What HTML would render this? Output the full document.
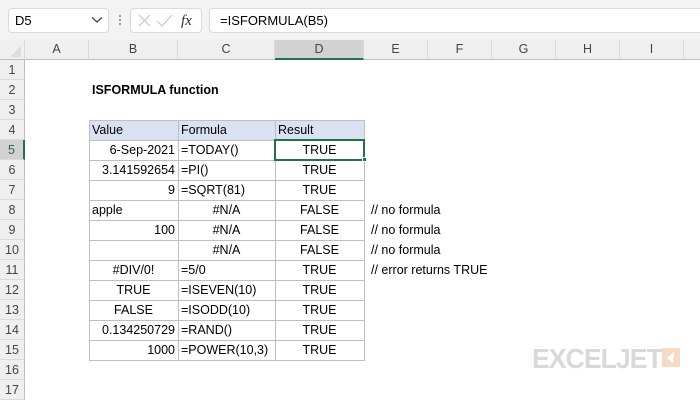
<!DOCTYPE html>
<html><head><meta charset="utf-8"><style>
*{margin:0;padding:0;box-sizing:border-box}
body{width:700px;height:400px;overflow:hidden;background:#fff;font-family:"Liberation Sans",Arial,sans-serif;font-size:12.5px;color:#000;position:relative}
.a{position:absolute}
.top{left:0;top:0;width:700px;height:40px;background:#f3f3f3}
.box{background:#fff;border:1px solid #dadada;border-radius:4px}
.hdr{top:40px;height:20px;background:#efefef;border-bottom:1px solid #bdbdbd;border-right:1px solid #dadada;text-align:center;line-height:19px;color:#444;font-size:12.5px}
.rn{left:0;width:25px;height:20px;background:#efefef;border-right:1px solid #bdbdbd;border-bottom:1px solid #dadada;color:#444;text-align:center;line-height:20px;font-size:12.5px}
.c{position:absolute;height:20px;line-height:21px;white-space:nowrap;padding:0 3px;overflow:hidden}
.r{text-align:right}.m{text-align:center}
.h{position:absolute;left:89px;width:276px;height:1px;background:#bfbfbf}
.v{position:absolute;top:120px;height:241px;width:1px;background:#bfbfbf}
.B{left:89px;width:89px}.C{left:178px;width:97px}.D{left:275px;width:89px}
</style></head><body>
<div class="a top"></div>
<div class="a box" style="left:8px;top:8px;width:101px;height:25px"></div>
<div class="a" style="left:15px;top:13px;font-size:13px">D5</div>
<svg class="a" style="left:91px;top:16px" width="12" height="8"><path d="M1 1.5 L6 6 L11 1.5" stroke="#444" stroke-width="1.3" fill="none"/></svg>
<div class="a" style="left:119px;top:15px;width:2px;height:2px;background:#999;box-shadow:0 4px #999,0 8px #999"></div>
<div class="a box" style="left:130px;top:8px;width:72px;height:25px"></div>
<svg class="a" style="left:137px;top:13px" width="60" height="16"><path d="M2 2 L13 13 M13 2 L2 13" stroke="#c8c8c8" stroke-width="1.2"/><path d="M20 8 L25 13 L35 2" stroke="#c8c8c8" stroke-width="1.2" fill="none"/><text x="44" y="12" font-family="Liberation Serif" font-style="italic" font-size="15" fill="#333">fx</text></svg>
<div class="a box" style="left:209px;top:8px;width:500px;height:25px"></div>
<div class="a" style="left:220px;top:13px;font-size:13px">=ISFORMULA(B5)</div>

<div class="a hdr" style="left:0;width:25px"><svg width="25" height="19"><path d="M21 17 L21 6 L10 17 Z" fill="#dcdcdc"/></svg></div>
<div class="a hdr" style="left:25px;width:64px">A</div>
<div class="a hdr" style="left:89px;width:89px">B</div>
<div class="a hdr" style="left:178px;width:97px">C</div>
<div class="a hdr" style="left:275px;width:89px;background:#d2d2d2;border-bottom:2px solid #217346">D</div>
<div class="a hdr" style="left:364px;width:64px">E</div>
<div class="a hdr" style="left:428px;width:64px">F</div>
<div class="a hdr" style="left:492px;width:64px">G</div>
<div class="a hdr" style="left:556px;width:64px">H</div>
<div class="a hdr" style="left:620px;width:64px">I</div>
<div class="a hdr" style="left:684px;width:20px"></div>

<div class="a rn" style="top:60px">1</div><div class="a rn" style="top:80px">2</div><div class="a rn" style="top:100px">3</div><div class="a rn" style="top:120px">4</div>
<div class="a rn" style="top:140px;background:#d2d2d2;border-right:2px solid #217346;color:#217346">5</div>
<div class="a rn" style="top:160px">6</div><div class="a rn" style="top:180px">7</div><div class="a rn" style="top:200px">8</div><div class="a rn" style="top:220px">9</div><div class="a rn" style="top:240px">10</div><div class="a rn" style="top:260px">11</div><div class="a rn" style="top:280px">12</div><div class="a rn" style="top:300px">13</div><div class="a rn" style="top:320px">14</div><div class="a rn" style="top:340px">15</div><div class="a rn" style="top:360px">16</div><div class="a rn" style="top:380px">17</div>

<div class="a" style="left:92px;top:83px;font-weight:bold;font-size:12.5px">ISFORMULA function</div>

<div class="a" style="left:89px;top:120px;width:276px;height:20px;background:#d9e1f2"></div>
<div class="h" style="top:120px"></div><div class="h" style="top:140px"></div><div class="h" style="top:160px"></div><div class="h" style="top:180px"></div><div class="h" style="top:200px"></div><div class="h" style="top:220px"></div><div class="h" style="top:240px"></div><div class="h" style="top:260px"></div><div class="h" style="top:280px"></div><div class="h" style="top:300px"></div><div class="h" style="top:320px"></div><div class="h" style="top:340px"></div><div class="h" style="top:360px"></div>
<div class="v" style="left:89px"></div><div class="v" style="left:178px"></div><div class="v" style="left:275px"></div><div class="v" style="left:364px"></div>

<div class="c B" style="top:120px">Value</div><div class="c C" style="top:120px">Formula</div><div class="c D" style="top:120px">Result</div>
<div class="c B r" style="top:140px">6-Sep-2021</div><div class="c C" style="top:140px">=TODAY()</div><div class="c D m" style="top:140px">TRUE</div>
<div class="c B r" style="top:160px">3.141592654</div><div class="c C" style="top:160px">=PI()</div><div class="c D m" style="top:160px">TRUE</div>
<div class="c B r" style="top:180px">9</div><div class="c C" style="top:180px">=SQRT(81)</div><div class="c D m" style="top:180px">TRUE</div>
<div class="c B" style="top:200px">apple</div><div class="c C m" style="top:200px">#N/A</div><div class="c D m" style="top:200px">FALSE</div>
<div class="c B r" style="top:220px">100</div><div class="c C m" style="top:220px">#N/A</div><div class="c D m" style="top:220px">FALSE</div>
<div class="c C m" style="top:240px">#N/A</div><div class="c D m" style="top:240px">FALSE</div>
<div class="c B m" style="top:260px">#DIV/0!</div><div class="c C" style="top:260px">=5/0</div><div class="c D m" style="top:260px">TRUE</div>
<div class="c B m" style="top:280px">TRUE</div><div class="c C" style="top:280px">=ISEVEN(10)</div><div class="c D m" style="top:280px">TRUE</div>
<div class="c B m" style="top:300px">FALSE</div><div class="c C" style="top:300px">=ISODD(10)</div><div class="c D m" style="top:300px">TRUE</div>
<div class="c B r" style="top:320px">0.134250729</div><div class="c C" style="top:320px">=RAND()</div><div class="c D m" style="top:320px">TRUE</div>
<div class="c B r" style="top:340px">1000</div><div class="c C" style="top:340px">=POWER(10,3)</div><div class="c D m" style="top:340px">TRUE</div>

<div class="a" style="left:274px;top:139px;width:91px;height:22px;border:2px solid #217346"></div>
<div class="a" style="left:362px;top:157px;width:5px;height:5px;background:#217346;border:1px solid #fff"></div>

<div class="c" style="left:368px;top:200px">// no formula</div>
<div class="c" style="left:368px;top:220px">// no formula</div>
<div class="c" style="left:368px;top:240px">// no formula</div>
<div class="c" style="left:368px;top:260px">// error returns TRUE</div>

<div class="a" style="left:532px;top:343px;font-size:28px;font-weight:bold;color:#d9d9d9;letter-spacing:-1px;transform:scaleX(0.95);transform-origin:left">EXCELJET</div>
<div class="a" style="left:662px;top:348px;width:18px;height:19px;background:#f8d9c4"><svg width="18" height="19"><path d="M12 4 L5 10 L11 15 Z" fill="#fff"/></svg></div>
</body></html>
